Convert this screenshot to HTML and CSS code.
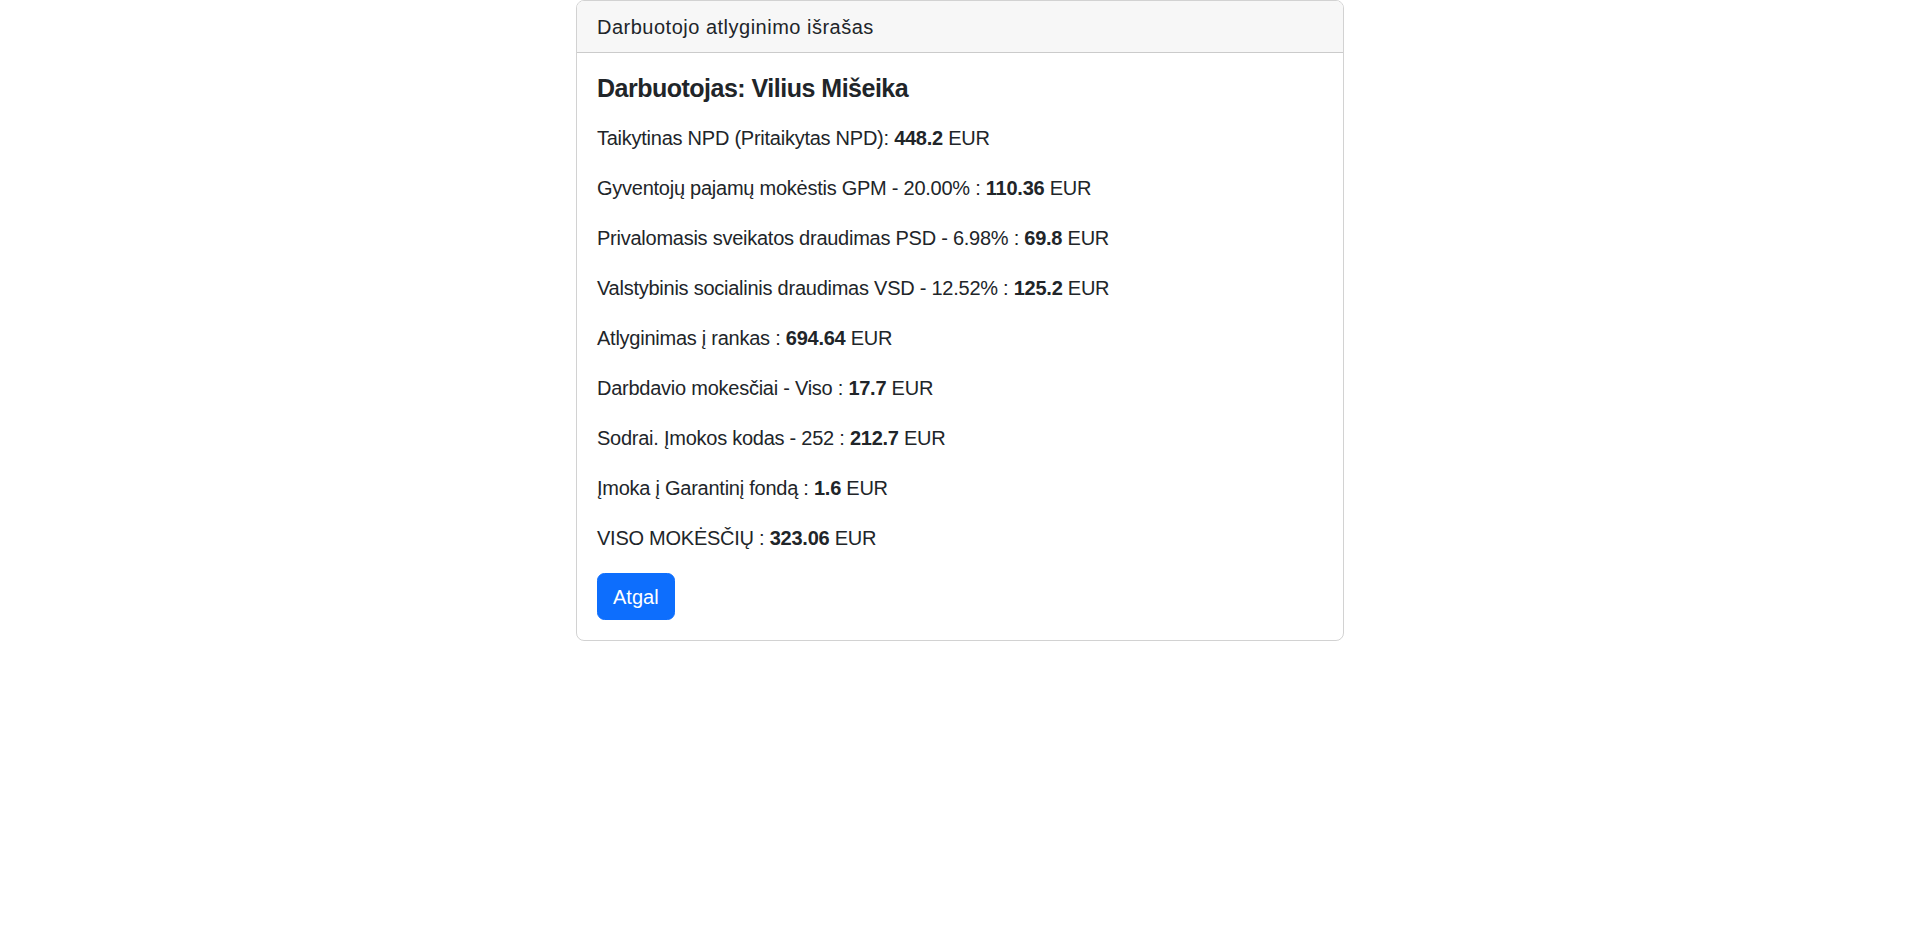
FILE: index.html
```html
<!DOCTYPE html>
<html lang="lt">
<head>
  <meta charset="UTF-8">
  <meta name="viewport" content="width=device-width, initial-scale=1.0">
  <title>Darbuotojo atlyginimo išrašas</title>
  <link rel="stylesheet" href="styles.css">
</head>
<body>
  <div class="card">
    <div class="card-header">Darbuotojo atlyginimo išrašas</div>

    <div class="card-body">
      <h5 class="card-title">Darbuotojas: Vilius Mišeika</h5>

      <p>Taikytinas NPD (Pritaikytas NPD): <b>448.2</b> EUR</p>
      <p>Gyventojų pajamų mokėstis GPM - 20.00% : <b>110.36</b> EUR</p>
      <p>Privalomasis sveikatos draudimas PSD - 6.98% : <b>69.8</b> EUR</p>
      <p>Valstybinis socialinis draudimas VSD - 12.52% : <b>125.2</b> EUR</p>
      <p>Atlyginimas į rankas : <b>694.64</b> EUR</p>
      <p>Darbdavio mokesčiai - Viso : <b>17.7</b> EUR</p>
      <p>Sodrai. Įmokos kodas - 252 : <b>212.7</b> EUR</p>
      <p>Įmoka į Garantinį fondą : <b>1.6</b> EUR</p>
      <p>VISO MOKĖSČIŲ : <b>323.06</b> EUR</p>

      <a class="btn-primary" href="#">Atgal</a>
    </div>
  </div>
</body>
</html>
```

FILE: styles.css
```css
:root {
  --text-dark: #212529;
  --border: rgba(0, 0, 0, 0.175);
  --header-bg: #f7f7f7;
  --primary: #0d6efd;
}

body {
  margin: 0;
  font-family: "Liberation Sans", Arial, sans-serif;
  font-size: 20px;
  line-height: 1.5;
  color: var(--text-dark);
  background: #fff;
}

.card {
  width: 40%;
  margin: 0 auto;
  border: 1px solid var(--border);
  border-radius: 8px;
  box-sizing: border-box;
  overflow: hidden;
}

.card-header {
  padding: 11px 20px 10px;
  background: var(--header-bg);
  border-bottom: 1px solid var(--border);
  letter-spacing: 0.5px;
}

.card-body {
  padding: 20px;
}

.card-title {
  margin: 0 0 20px;
  font-size: 25px;
  font-weight: 700;
  line-height: 1.2;
  letter-spacing: -0.5px;
}

p {
  margin: 0 0 20px;
  letter-spacing: -0.25px;
}

b {
  font-weight: 700;
}

.btn-primary {
  display: inline-block;
  padding: 7.5px 15px;
  border: 1px solid var(--primary);
  border-radius: 7.5px;
  background: var(--primary);
  color: #fff;
  text-decoration: none;
  line-height: 1.5;
}
```
